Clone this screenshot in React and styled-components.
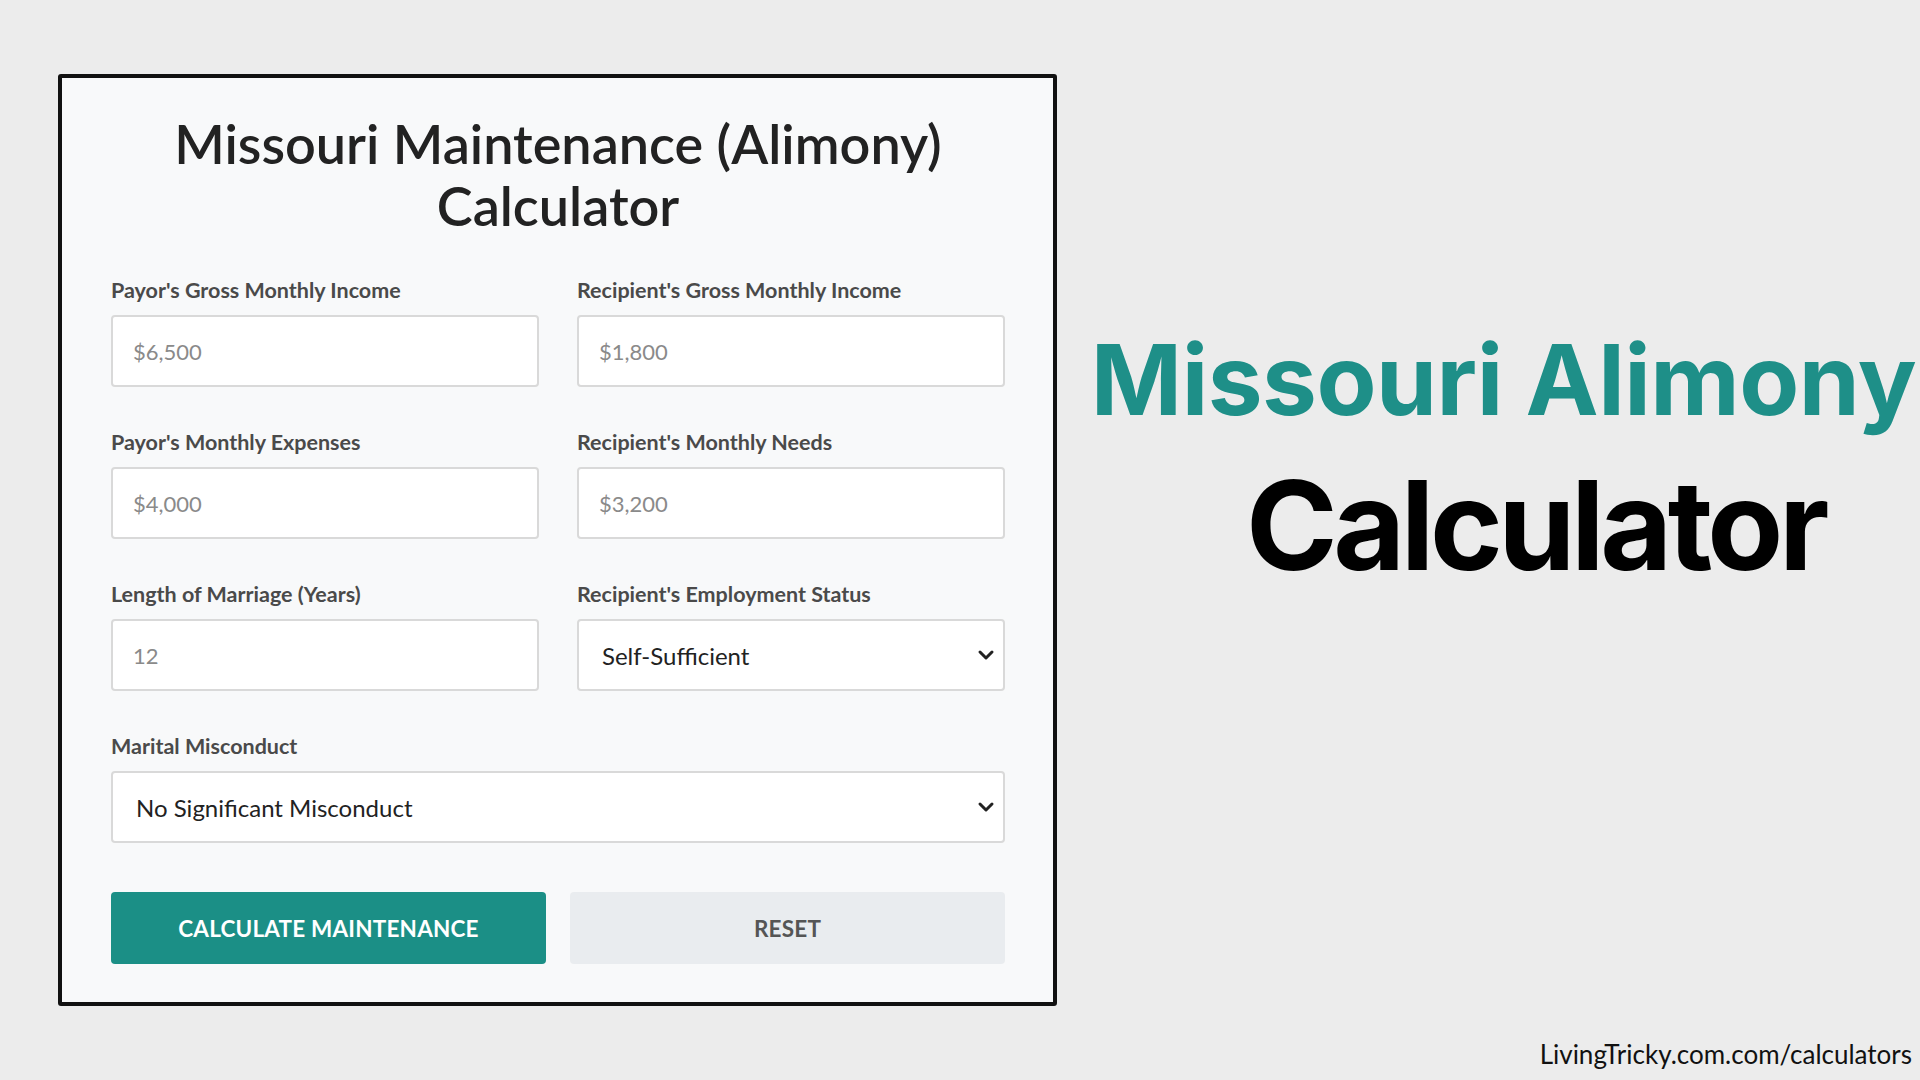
import styled, { createGlobalStyle } from "styled-components";

const GlobalStyle = createGlobalStyle`
  * { box-sizing: border-box; }
  html, body {
    margin: 0;
    padding: 0;
    background: #ececec;
    font-family: "Lato", "Open Sans", sans-serif;
  }
`;

const Page = styled.div`
  width: 1920px;
  height: 1080px;
  display: flex;
  flex-direction: column;
  overflow: hidden;
`;

const Main = styled.div`
  flex: 1;
  display: flex;
  align-items: flex-start;
  padding: 74px 0 0 58px;
`;

const Card = styled.div`
  width: 999px;
  height: 932px;
  background: #f8f9fa;
  border: 4px solid #111;
  border-radius: 3px;
  padding: 35px 48px 38px 49px;
  display: flex;
  flex-direction: column;
`;

const Title = styled.h1`
  margin: 0 0 41px;
  text-align: center;
  font-family: "Lato", sans-serif;
  font-size: 54px;
  line-height: 62px;
  font-weight: 600;
  color: #222;
`;

const Grid = styled.div`
  display: grid;
  grid-template-columns: 1fr 1fr;
  column-gap: 38px;
  row-gap: 43px;
`;

const Field = styled.div`
  display: flex;
  flex-direction: column;
  gap: 13px;
  grid-column: ${(props) => (props.wide ? "1 / span 2" : "auto")};
`;

const Label = styled.label`
  font-size: 21.5px;
  line-height: 24px;
  font-weight: 700;
  color: #4a4a4a;
`;

const Input = styled.input`
  height: 72px;
  width: 100%;
  border: 2px solid #d9d9d9;
  border-radius: 4px;
  background: #fff;
  padding: 0 20px;
  font-family: "Lato", sans-serif;
  font-size: 22px;
  color: #222;
  outline: none;
  &::placeholder {
    color: #8a8a8a;
  }
`;

const SelectWrap = styled.div`
  position: relative;
  width: 100%;
`;

const Select = styled.select`
  appearance: none;
  -webkit-appearance: none;
  height: 72px;
  width: 100%;
  border: 2px solid #d9d9d9;
  border-radius: 4px;
  background: #fff;
  padding: 0 50px 0 23px;
  font-family: "Lato", sans-serif;
  font-size: 24px;
  color: #222;
  outline: none;
`;

const Chevron = styled.svg`
  position: absolute;
  right: 9px;
  top: 50%;
  transform: translateY(-50%);
  width: 20px;
  height: 20px;
  pointer-events: none;
`;

const Buttons = styled.div`
  margin-top: 49px;
  display: flex;
  gap: 24px;
`;

const Button = styled.button`
  flex: 1;
  height: 72px;
  border: none;
  border-radius: 4px;
  font-family: "Lato", sans-serif;
  font-size: 22.5px;
  font-weight: 700;
  letter-spacing: 0.2px;
  cursor: pointer;
  background: ${(props) => (props.primary ? "#1b8f86" : "#e9ecef")};
  color: ${(props) => (props.primary ? "#fff" : "#555")};
`;

const Side = styled.div`
  flex: 1;
  display: flex;
  flex-direction: column;
  align-items: center;
  padding-top: 246px;
  padding-left: 30px;
  font-family: "Inter", sans-serif;
  font-weight: 700;
`;

const Heading = styled.div`
  font-size: 98px;
  line-height: 120px;
  color: #1e8f88;
  letter-spacing: -0.5px;
  white-space: nowrap;
`;

const SubHeading = styled.div`
  font-size: 124px;
  line-height: 150px;
  margin-top: 10px;
  color: #000;
  margin-left: 64px;
  letter-spacing: -4.5px;
`;

const Footer = styled.div`
  text-align: right;
  padding: 0 8px 10px 0;
  font-family: "Lato", sans-serif;
  font-size: 26px;
  color: #111;
`;

const ChevronIcon = () => (
  <Chevron viewBox="0 0 20 20">
    <path d="M4 7l6 6 6-6" fill="none" stroke="#222" strokeWidth="3" strokeLinecap="round" strokeLinejoin="round" />
  </Chevron>
);

const App = () => {
  return (
    <Page>
      <GlobalStyle />
      <Main>
        <Card>
          <Title>
            Missouri Maintenance (Alimony)
            <br />
            Calculator
          </Title>
          <Grid>
            <Field>
              <Label>Payor's Gross Monthly Income</Label>
              <Input placeholder="$6,500" />
            </Field>
            <Field>
              <Label>Recipient's Gross Monthly Income</Label>
              <Input placeholder="$1,800" />
            </Field>
            <Field>
              <Label>Payor's Monthly Expenses</Label>
              <Input placeholder="$4,000" />
            </Field>
            <Field>
              <Label>Recipient's Monthly Needs</Label>
              <Input placeholder="$3,200" />
            </Field>
            <Field>
              <Label>Length of Marriage (Years)</Label>
              <Input placeholder="12" />
            </Field>
            <Field>
              <Label>Recipient's Employment Status</Label>
              <SelectWrap>
                <Select defaultValue="self">
                  <option value="self">Self-Sufficient</option>
                  <option value="partial">Partially Employed</option>
                  <option value="none">Unemployed</option>
                </Select>
                <ChevronIcon />
              </SelectWrap>
            </Field>
            <Field wide>
              <Label>Marital Misconduct</Label>
              <SelectWrap>
                <Select defaultValue="none">
                  <option value="none">No Significant Misconduct</option>
                  <option value="payor">Payor Misconduct</option>
                  <option value="recipient">Recipient Misconduct</option>
                </Select>
                <ChevronIcon />
              </SelectWrap>
            </Field>
          </Grid>
          <Buttons>
            <Button primary>CALCULATE MAINTENANCE</Button>
            <Button>RESET</Button>
          </Buttons>
        </Card>
        <Side>
          <Heading>Missouri Alimony</Heading>
          <SubHeading>Calculator</SubHeading>
        </Side>
      </Main>
      <Footer>LivingTricky.com.com/calculators</Footer>
    </Page>
  );
};

export default App;
